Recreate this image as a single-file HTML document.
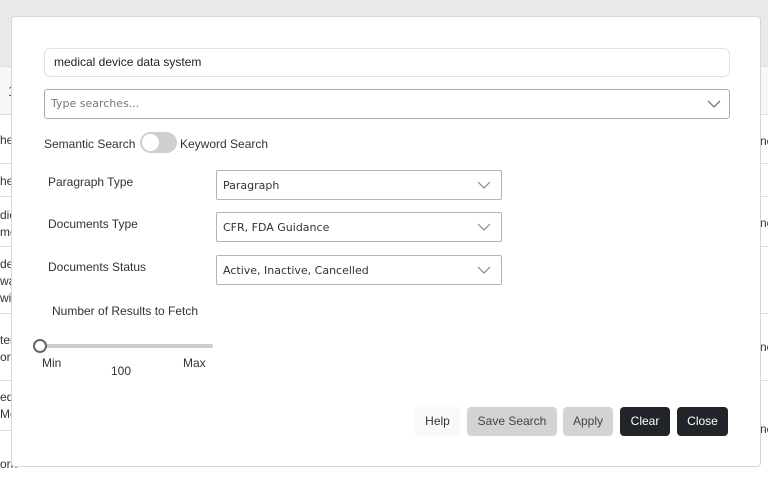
<!DOCTYPE html>
<html><head><style>
*{box-sizing:border-box;margin:0;padding:0}
body{width:768px;height:478px;overflow:hidden;background:#fff;font-family:"Liberation Sans",sans-serif;position:relative}
.bgtop{position:absolute;left:0;top:0;width:768px;height:66px;background:#e9e9e9}
.hd{position:absolute;left:0;top:66px;width:768px;height:49px;background:#f7f7f7;border-top:1px solid #ddd;border-bottom:1px solid #ddd}
.ln{position:absolute;left:0;width:768px;height:1px;background:#ddd}
.frag{position:absolute;font-size:12px;color:#333}
.modal{position:absolute;left:11px;top:16px;width:750px;height:451px;background:#fff;border:1px solid #d6d6d6;border-radius:4px}
.inp{position:absolute;border:1px solid #dee2e6;border-radius:6px;font-size:12px;color:#222}
.sel{position:absolute;border:1px solid #b5b5b5;border-radius:2px;color:#333;padding-left:6px;line-height:29px;font-family:"DejaVu Sans","Liberation Sans",sans-serif;font-size:11px}
.chev{position:absolute;right:10px;top:9px}
.lbl{position:absolute;font-size:12px;color:#333}
.btn{position:absolute;top:390px;height:29px;border-radius:4px;font-size:12px;line-height:29px;text-align:center}
</style></head><body>
<div class="bgtop"></div>
<div class="hd"></div>
<div class="ln" style="top:163px"></div>
<div class="ln" style="top:196px;"></div>
<div class="ln" style="top:246px"></div>
<div class="ln" style="top:313px"></div>
<div class="ln" style="top:380px"></div>
<div class="ln" style="top:430px"></div>
<div class="frag" style="left:8px;top:83px;font-size:15px;color:#555">1</div>
<div class="frag" style="left:0;top:133px">he</div>
<div class="frag" style="left:0;top:174px">he</div>
<div class="frag" style="left:0;top:207px;line-height:17px">dic<br>me</div>
<div class="frag" style="left:0;top:256px;line-height:17px">de<br>wa<br>wi</div>
<div class="frag" style="left:0;top:332px;line-height:17px">ter<br>orti</div>
<div class="frag" style="left:0;top:389px;line-height:17px">edi<br>Me</div>
<div class="frag" style="left:0;top:457px">orn</div>
<div class="frag" style="left:760px;top:134px">nc</div>
<div class="frag" style="left:760px;top:216px">nc</div>
<div class="frag" style="left:760px;top:340px">nc</div>
<div class="frag" style="left:760px;top:422px">nc</div>
<div class="modal">
 <div class="inp" style="left:32px;top:31px;width:686px;height:29px;line-height:27px;padding-left:9px">medical device data system</div>
 <div class="inp" style="left:32px;top:72px;width:686px;height:30px;border-color:#aaa;border-radius:3px;line-height:28px;padding-left:6px;color:#777;font-family:'DejaVu Sans','Liberation Sans',sans-serif;font-size:11px">Type searches...
  <svg class="chev" style="top:9px;right:8px" width="14" height="10" viewBox="0 0 14 10"><path d="M1 2l6 6 6-6" fill="none" stroke="#777" stroke-width="1.3"/></svg></div>
 <div class="lbl" style="left:32px;top:120px">Semantic Search</div>
 <div style="position:absolute;left:128px;top:115px;width:37px;height:21px;border-radius:11px;background:#cfcfcf"><div style="position:absolute;left:2px;top:2px;width:17px;height:17px;border-radius:50%;background:#fff"></div></div>
 <div class="lbl" style="left:168px;top:120px">Keyword Search</div>
 <div class="lbl" style="left:36px;top:158px">Paragraph Type</div>
 <div class="lbl" style="left:36px;top:200px">Documents Type</div>
 <div class="lbl" style="left:36px;top:243px">Documents Status</div>
 <div class="sel" style="left:204px;top:153px;width:286px;height:30px">Paragraph<svg class="chev" width="14" height="10" viewBox="0 0 14 10"><path d="M1 2l6 6 6-6" fill="none" stroke="#888" stroke-width="1.2"/></svg></div>
 <div class="sel" style="left:204px;top:195px;width:286px;height:30px">CFR, FDA Guidance<svg class="chev" width="14" height="10" viewBox="0 0 14 10"><path d="M1 2l6 6 6-6" fill="none" stroke="#888" stroke-width="1.2"/></svg></div>
 <div class="sel" style="left:204px;top:238px;width:286px;height:30px">Active, Inactive, Cancelled<svg class="chev" width="14" height="10" viewBox="0 0 14 10"><path d="M1 2l6 6 6-6" fill="none" stroke="#888" stroke-width="1.2"/></svg></div>
 <div class="lbl" style="left:40px;top:287px">Number of Results to Fetch</div>
 <div style="position:absolute;left:28px;top:327px;width:173px;height:4px;background:#ccc;border-radius:2px"></div>
 <div style="position:absolute;left:21px;top:322px;width:14px;height:14px;border-radius:50%;background:#fff;border:2px solid #666"></div>
 <div class="lbl" style="left:30px;top:339px">Min</div>
 <div class="lbl" style="left:171px;top:339px">Max</div>
 <div class="lbl" style="left:99px;top:347px">100</div>
 <div class="btn" style="left:403px;width:45px;background:#f8f9fa;color:#333">Help</div>
 <div class="btn" style="left:455px;width:90px;background:#d3d3d3;color:#444">Save Search</div>
 <div class="btn" style="left:551px;width:50px;background:#d3d3d3;color:#444">Apply</div>
 <div class="btn" style="left:608px;width:50px;background:#212529;color:#fff">Clear</div>
 <div class="btn" style="left:665px;width:51px;background:#212529;color:#fff">Close</div>
</div>
</body></html>
